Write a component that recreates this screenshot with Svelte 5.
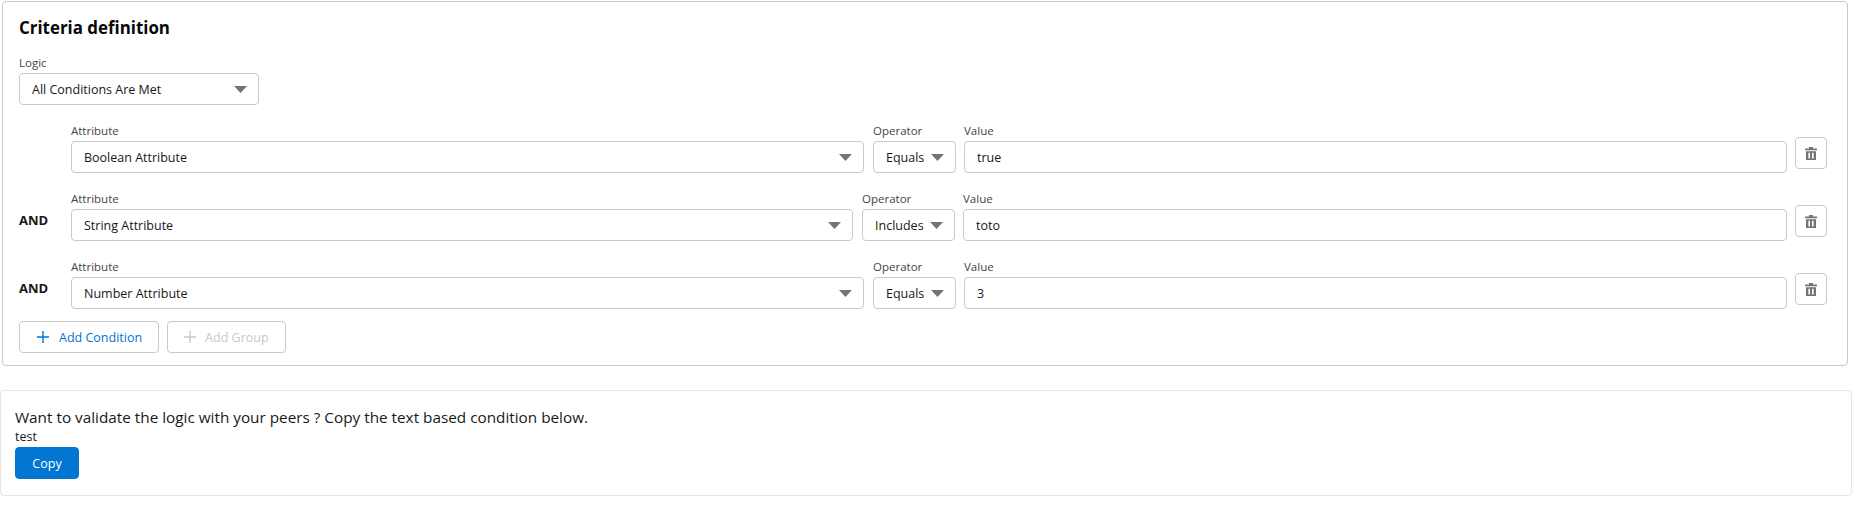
<script>
	let rows = [
		{ join: "", attribute: "Boolean Attribute", operator: "Equals", value: "true", attrGrow: 793, valueGrow: 823, opWidth: 83 },
		{ join: "AND", attribute: "String Attribute", operator: "Includes", value: "toto", attrGrow: 782, valueGrow: 824, opWidth: 93 },
		{ join: "AND", attribute: "Number Attribute", operator: "Equals", value: "3", attrGrow: 793, valueGrow: 823, opWidth: 83 }
	];
</script>

{#snippet caret()}
	<svg class="caret" viewBox="0 0 12 7" preserveAspectRatio="none" aria-hidden="true"><path d="M0 0h12L6 7z" /></svg>
{/snippet}

<div class="page">
	<section class="card criteria">
		<h2>Criteria definition</h2>

		<div class="logic">
			<span class="label">Logic</span>
			<div class="control select">
				<span>All Conditions Are Met</span>
				{@render caret()}
			</div>
		</div>

		{#each rows as row}
			<div class="row">
				<div class="join">{row.join}</div>
				<div class="field" style="flex: {row.attrGrow} 1 0">
					<span class="label">Attribute</span>
					<div class="control select">
						<span>{row.attribute}</span>
						{@render caret()}
					</div>
				</div>
				<div class="field operator" style="width: {row.opWidth}px">
					<span class="label">Operator</span>
					<div class="control select">
						<span>{row.operator}</span>
						{@render caret()}
					</div>
				</div>
				<div class="field" style="flex: {row.valueGrow} 1 0">
					<span class="label">Value</span>
					<div class="control"><span>{row.value}</span></div>
				</div>
				<button class="icon-btn" aria-label="Delete">
					<svg viewBox="0 0 12 13" aria-hidden="true">
						<path d="M4 0h4v1.4h4v1.8H0V1.4h4z" />
						<path fill-rule="evenodd" d="M1 4.2h10V13H1zM3.4 5.8v5.6h1.6V5.8zM7 5.8v5.6h1.6V5.8z" />
					</svg>
				</button>
			</div>
		{/each}

		<div class="actions">
			<button class="btn add">
				<svg viewBox="0 0 14 14" aria-hidden="true"><path d="M7 1v12M1 7h12" /></svg>
				Add Condition
			</button>
			<button class="btn add disabled">
				<svg viewBox="0 0 14 14" aria-hidden="true"><path d="M7 1v12M1 7h12" /></svg>
				Add Group
			</button>
		</div>
	</section>

	<section class="card share">
		<p class="intro">Want to validate the logic with your peers ? Copy the text based condition below.</p>
		<p class="text">test</p>
		<button class="btn copy">Copy</button>
	</section>
</div>

<style>
	:global(body) {
		margin: 0;
		background: #fff;
		font-family: "Open Sans", "Noto Sans", sans-serif;
		color: #181818;
	}

	.page {
		width: 1852px;
		padding-top: 1px;
		box-sizing: border-box;
	}

	.card {
		background: #fff;
		box-sizing: border-box;
		border-radius: 4px;
	}

	.criteria {
		margin-left: 2px;
		width: 1846px;
		height: 365px;
		border: 1px solid #c9c9c9;
		padding: 0 20px 0 16px;
	}

	h2 {
		margin: 0;
		padding-top: 14px;
		height: 46px;
		box-sizing: border-box;
		font-size: 16.9px;
		line-height: 24px;
		font-weight: 700;
		color: #080707;
	}

	.label {
		display: block;
		height: 15px;
		font-size: 11.5px;
		line-height: 15px;
		color: #444;
		white-space: nowrap;
	}

	.logic {
		width: 240px;
		margin-top: 7px;
		margin-bottom: 18px;
	}

	.control {
		display: flex;
		align-items: center;
		justify-content: space-between;
		box-sizing: border-box;
		height: 32px;
		margin-top: 3px;
		padding: 0 11px 0 12px;
		border: 1px solid #c9c9c9;
		border-radius: 4px;
		font-size: 12.5px;
		color: #181818;
		white-space: nowrap;
	}

	.caret {
		width: 13px;
		height: 7px;
		fill: #747474;
		flex: none;
	}

	.row {
		display: flex;
		align-items: flex-start;
		gap: 8px;
		height: 68px;
	}

	.join {
		width: 44px;
		flex: none;
		padding-top: 20px;
		font-size: 13px;
		line-height: 18px;
		font-weight: 700;
		color: #181818;
	}

	.field {
		flex: none;
		min-width: 0;
	}

	.operator {
		margin-left: 1px;
	}

	.icon-btn {
		flex: none;
		width: 32px;
		height: 32px;
		margin-top: 14px;
		padding: 0;
		display: flex;
		align-items: center;
		justify-content: center;
		background: #fff;
		border: 1px solid #c9c9c9;
		border-radius: 4px;
	}

	.icon-btn svg {
		width: 12px;
		height: 13px;
		fill: #747474;
	}

	.actions {
		display: flex;
		gap: 8px;
		margin-top: -6px;
	}

	.btn {
		box-sizing: border-box;
		height: 32px;
		font-family: inherit;
		font-size: 12.5px;
		border-radius: 4px;
		border: 1px solid #c9c9c9;
		background: #fff;
		white-space: nowrap;
	}

	.add {
		display: flex;
		align-items: center;
		gap: 9px;
		padding: 0 16px;
		color: #0176d3;
	}

	.add svg {
		width: 14px;
		height: 14px;
		fill: none;
		stroke: #0176d3;
		stroke-width: 1.4;
	}

	.add.disabled {
		color: #c9c9c9;
		padding: 0 16px 0 15px;
		gap: 8px;
	}

	.add.disabled svg {
		stroke: #c9c9c9;
	}

	.share {
		margin-top: 24px;
		height: 106px;
		border: 1px solid #e5e5e5;
		padding: 16px 14px 0;
	}

	.intro {
		margin: 0;
		font-size: 15.3px;
		line-height: 21px;
		color: #181818;
	}

	.text {
		margin: 0;
		font-size: 12.5px;
		line-height: 18px;
	}

	.copy {
		display: block;
		width: 64px;
		margin-top: 1px;
		background: #0176d3;
		border-color: #0176d3;
		color: #fff;
		padding: 0;
	}
</style>
